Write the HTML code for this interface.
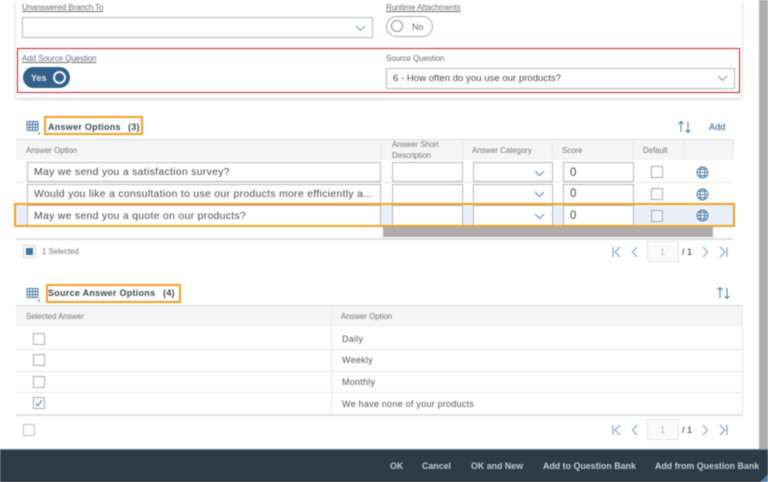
<!DOCTYPE html>
<html><head><meta charset="utf-8">
<style>
html,body{margin:0;padding:0;background:#fff;width:768px;height:482px;overflow:hidden}
#p{position:relative;width:768px;height:482px;overflow:hidden;font-family:"Liberation Sans",sans-serif;filter:blur(.5px);background:#fff}
#p div,#p span.t,#p svg{position:absolute}
.t{position:absolute;white-space:nowrap;line-height:1}
.lbl{font-size:8px;color:#6a6d70;letter-spacing:-.08px}
.u{text-decoration:underline}
.h{font-size:7.8px;color:#74777a}
.inp{background:#fff;border:1px solid #b5b7b9;box-sizing:border-box}
.big{font-size:10.4px;color:#4a4d50;letter-spacing:.32px}
.cell{font-size:9px;color:#55585b;letter-spacing:.25px}
.cb{width:12px;height:12px;border:1px solid #a9abad;background:#fff;box-sizing:border-box}
.ttl{font-size:9px;font-weight:bold;color:#3f4a55;letter-spacing:.27px}
.foot{font-size:8.85px;font-weight:bold;color:#c3cbd3}
.ln{background:#e8e9ea}
</style></head><body>
<div id="p">
<div style="left:759px;top:0;width:9px;height:449px;background:#adadad"></div>
<div style="left:16px;top:0;width:726px;height:98px;background:#fff;box-shadow:0 1px 3px rgba(0,0,0,.2)"></div>

<span class="t lbl u" style="left:22px;top:4px">Unanswered Branch To</span>
<div class="inp" style="left:22px;top:17px;width:351px;height:21px"></div>
<svg style="left:355px;top:25px" width="11" height="7" viewBox="0 0 11 7"><path d="M1 1l4.500 4.500L10 1" fill="none" stroke="#7d9bb5" stroke-width="1"/></svg>

<span class="t lbl u" style="left:386px;top:4px">Runtime Attachments</span>
<div style="left:386px;top:16px;width:47px;height:21px;border:1px solid #a9abad;border-radius:11px;box-sizing:border-box;background:#fff"></div>
<div style="left:391px;top:20px;width:12px;height:12px;border:1.500px solid #8d9092;border-radius:50%;box-sizing:border-box"></div>
<span class="t" style="left:412px;top:23px;font-size:9px;color:#6a6d70">No</span>

<div style="left:17px;top:48px;width:723px;height:45px;border:1.700px solid #c8202c;box-sizing:border-box"></div>
<span class="t lbl u" style="left:22px;top:55px">Add Source Question</span>
<div style="left:23px;top:67px;width:47px;height:21px;border-radius:11px;background:#346187"></div>
<span class="t" style="left:31px;top:74px;font-size:9px;font-weight:bold;color:#dfe7ee">Yes</span>
<div style="left:53px;top:71px;width:13px;height:13px;border:2px solid #f0f4f7;border-radius:50%;box-sizing:border-box"></div>

<span class="t lbl" style="left:386px;top:55px">Source Question</span>
<div class="inp" style="left:386px;top:68px;width:349px;height:21px"></div>
<span class="t big" style="left:393px;top:74px;font-size:9.600px;letter-spacing:0">6 - How often do you use our products?</span>
<svg style="left:717px;top:75px" width="11" height="7" viewBox="0 0 11 7"><path d="M1 1l4.500 4.500L10 1" fill="none" stroke="#7d9bb5" stroke-width="1"/></svg>

<!-- Answer options title -->
<svg style="left:26px;top:120px" width="15" height="15" viewBox="0 0 15 15"><path d="M1 1.500h11M1 4.500h11M1 7.500h11M1 10.500h11M1 1.500v9M3.700 1.500v9M6.500 1.500v9M9.300 1.500v9M12 1.500v9M12 13l1 1 1-1" stroke="#4d7da6" stroke-width="1" fill="none"/></svg>
<div style="left:44px;top:116px;width:99px;height:19px;border:2px solid #f2a024;box-sizing:border-box"></div>
<span class="t ttl" style="left:48px;top:123px">Answer Options</span>
<span class="t ttl" style="left:128px;top:123px">(3)</span>

<svg style="left:677px;top:120px" width="15" height="14" viewBox="0 0 15 14"><path d="M4 12V1.500M1.500 4L4 1.500 6.500 4M11 2v10.500M8.500 10l2.500 2.500 2.500-2.500" stroke="#4d7da6" stroke-width="1" fill="none"/></svg>
<span class="t" style="left:709px;top:123px;font-size:9px;color:#4d7da6;letter-spacing:.2px;-webkit-text-stroke:.2px #4d7da6">Add</span>

<!-- table 1 -->
<div style="left:16px;top:139px;width:717px;height:21px;background:#f5f5f5;border-top:1.500px solid #dcdddd;box-sizing:border-box"></div>
<div class="ln" style="left:381px;top:139px;width:1px;height:21px"></div>
<div class="ln" style="left:462px;top:139px;width:1px;height:21px"></div>
<div class="ln" style="left:552px;top:139px;width:1px;height:21px"></div>
<div class="ln" style="left:633px;top:139px;width:1px;height:21px"></div>
<div class="ln" style="left:684px;top:139px;width:1px;height:21px"></div>
<div class="ln" style="left:733px;top:139px;width:1px;height:21px"></div>
<span class="t h" style="left:26px;top:147px">Answer Option</span>
<span class="t h" style="left:392px;top:141px">Answer Short</span>
<span class="t h" style="left:392px;top:152px">Description</span>
<span class="t h" style="left:472px;top:147px">Answer Category</span>
<span class="t h" style="left:562px;top:147px">Score</span>
<span class="t h" style="left:643px;top:147px">Default</span>

<div class="ln" style="left:16px;top:182px;width:717px;height:1px"></div>
<div class="ln" style="left:16px;top:204px;width:717px;height:1px"></div>
<div style="left:16px;top:205px;width:717px;height:21px;background:#e9f0f7"></div>
<div style="left:16px;top:238px;width:717px;height:1.500px;background:#dfe0e1"></div>
<div style="left:383px;top:227px;width:330px;height:10px;background:#adadad"></div>

<div class="inp" style="left:27px;top:162px;width:354px;height:20px"></div>
<div class="inp" style="left:27px;top:184px;width:354px;height:20px"></div>
<div class="inp" style="left:27px;top:205px;width:354px;height:21px"></div>
<span class="t big" style="left:34px;top:168px">May we send you a satisfaction survey?</span>
<span class="t big" style="left:34px;top:190px">Would you like a consultation to use our products more efficiently a...</span>
<span class="t big" style="left:34px;top:212px">May we send you a quote on our products?</span>

<div class="inp" style="left:392px;top:162px;width:71px;height:20px"></div>
<div class="inp" style="left:392px;top:184px;width:71px;height:20px"></div>
<div class="inp" style="left:392px;top:205px;width:71px;height:21px"></div>
<div class="inp" style="left:473px;top:162px;width:80px;height:20px"></div>
<div class="inp" style="left:473px;top:184px;width:80px;height:20px"></div>
<div class="inp" style="left:473px;top:205px;width:80px;height:21px"></div>
<svg style="left:534px;top:170px" width="11" height="7" viewBox="0 0 11 7"><path d="M1 1l4.500 4.500L10 1" fill="none" stroke="#5f8aae" stroke-width="1"/></svg>
<svg style="left:534px;top:191px" width="11" height="7" viewBox="0 0 11 7"><path d="M1 1l4.500 4.500L10 1" fill="none" stroke="#5f8aae" stroke-width="1"/></svg>
<svg style="left:534px;top:213px" width="11" height="7" viewBox="0 0 11 7"><path d="M1 1l4.500 4.500L10 1" fill="none" stroke="#5f8aae" stroke-width="1"/></svg>
<div class="inp" style="left:563px;top:162px;width:71px;height:20px"></div>
<div class="inp" style="left:563px;top:184px;width:71px;height:20px"></div>
<div class="inp" style="left:563px;top:205px;width:71px;height:21px"></div>
<span class="t big" style="left:570px;top:168px;font-size:11.500px">0</span>
<span class="t big" style="left:570px;top:189px;font-size:11.500px">0</span>
<span class="t big" style="left:570px;top:211px;font-size:11.500px">0</span>

<div class="cb" style="left:651px;top:166px"></div>
<div class="cb" style="left:651px;top:188px"></div>
<div class="cb" style="left:651px;top:210px;background:#eef3f8"></div>
<svg style="left:696px;top:166px" width="13" height="13" viewBox="0 0 13 13"><g fill="none" stroke="#4d7da6" stroke-width=".9"><circle cx="6.500" cy="6.500" r="5.500"/><ellipse cx="6.500" cy="6.500" rx="2.500" ry="5.500"/><path d="M1 6.500h11M2 3.500h9M2 9.500h9"/></g></svg>
<svg style="left:696px;top:188px" width="13" height="13" viewBox="0 0 13 13"><g fill="none" stroke="#4d7da6" stroke-width=".9"><circle cx="6.500" cy="6.500" r="5.500"/><ellipse cx="6.500" cy="6.500" rx="2.500" ry="5.500"/><path d="M1 6.500h11M2 3.500h9M2 9.500h9"/></g></svg>
<svg style="left:696px;top:209px" width="13" height="13" viewBox="0 0 13 13"><g fill="none" stroke="#4d7da6" stroke-width=".9"><circle cx="6.500" cy="6.500" r="5.500"/><ellipse cx="6.500" cy="6.500" rx="2.500" ry="5.500"/><path d="M1 6.500h11M2 3.500h9M2 9.500h9"/></g></svg>

<div style="left:14px;top:203px;width:721px;height:24px;border:2px solid #f2a024;box-sizing:border-box"></div>

<div class="cb" style="left:23px;top:245px;border-radius:2px;width:13px;height:13px;border-color:#d0d2d4"></div>
<div style="left:26px;top:248px;width:7px;height:7px;background:#3a76a8"></div>
<span class="t h" style="left:42px;top:248px">1 Selected</span>

<!-- pager 1 -->
<svg style="left:611px;top:246px" width="120" height="12" viewBox="0 0 120 12"><g fill="none" stroke="#8fafca" stroke-width="1.300"><path d="M2 1v10M9 1L4 6l5 5M26 1l-4.500 5 4.500 5M92 1l4.500 5L92 11M109 1l5 5-5 5M116 1v10"/></g></svg>
<div style="left:647px;top:241px;width:32px;height:21px;background:#fafafa;border:1px solid #e5e6e7;box-sizing:border-box"></div>
<span class="t" style="left:660px;top:248px;font-size:9px;color:#b8babc">1</span>
<span class="t" style="left:682px;top:248px;font-size:9px;color:#6a6d70;font-weight:bold">/ 1</span>

<!-- Source title -->
<svg style="left:26px;top:287px" width="15" height="15" viewBox="0 0 15 15"><path d="M1 1.500h11M1 4.500h11M1 7.500h11M1 10.500h11M1 1.500v9M3.700 1.500v9M6.500 1.500v9M9.300 1.500v9M12 1.500v9M12 13l1 1 1-1" stroke="#4d7da6" stroke-width="1" fill="none"/></svg>
<div style="left:46px;top:284px;width:135px;height:19px;border:2px solid #f2a024;box-sizing:border-box"></div>
<span class="t ttl" style="left:48px;top:289px">Source Answer Options</span>
<span class="t ttl" style="left:163px;top:289px">(4)</span>
<svg style="left:716px;top:286px" width="15" height="14" viewBox="0 0 15 14"><path d="M4 12V1.500M1.500 4L4 1.500 6.500 4M11 2v10.500M8.500 10l2.500 2.500 2.500-2.500" stroke="#4d7da6" stroke-width="1" fill="none"/></svg>

<!-- table 2 -->
<div style="left:16px;top:305px;width:727px;height:22px;background:#f5f5f5;border-top:1.500px solid #d8d9da;box-sizing:border-box"></div>
<div class="ln" style="left:331px;top:305px;width:1px;height:109px"></div>
<div class="ln" style="left:742px;top:305px;width:1px;height:109px"></div>
<div class="ln" style="left:16px;top:349px;width:727px;height:1px"></div>
<div class="ln" style="left:16px;top:371px;width:727px;height:1px"></div>
<div class="ln" style="left:16px;top:392px;width:727px;height:1px"></div>
<div style="left:16px;top:414px;width:727px;height:2px;background:#e0e1e2"></div>
<span class="t h" style="left:26px;top:313px">Selected Answer</span>
<span class="t h" style="left:341px;top:313px">Answer Option</span>
<div class="cb" style="left:33px;top:333px"></div>
<div class="cb" style="left:33px;top:354px"></div>
<div class="cb" style="left:33px;top:376px"></div>
<div class="cb" style="left:33px;top:397px"></div>
<svg style="left:35px;top:399px" width="8" height="8" viewBox="0 0 8 8"><path d="M1 4.500L3 6.800 7 1" fill="none" stroke="#3f7db0" stroke-width="1"/></svg>
<span class="t cell" style="left:342px;top:335px">Daily</span>
<span class="t cell" style="left:342px;top:356px">Weekly</span>
<span class="t cell" style="left:342px;top:378px">Monthly</span>
<span class="t cell" style="left:342px;top:400px">We have none of your products</span>

<div class="cb" style="left:23px;top:424px;width:12px;height:12px;border-radius:2px;border-color:#b9bbbd"></div>

<svg style="left:611px;top:424px" width="120" height="12" viewBox="0 0 120 12"><g fill="none" stroke="#8fafca" stroke-width="1.300"><path d="M2 1v10M9 1L4 6l5 5M26 1l-4.500 5 4.500 5M92 1l4.500 5L92 11M109 1l5 5-5 5M116 1v10"/></g></svg>
<div style="left:647px;top:419px;width:32px;height:21px;background:#fafafa;border:1px solid #e5e6e7;box-sizing:border-box"></div>
<span class="t" style="left:660px;top:426px;font-size:9px;color:#b8babc">1</span>
<span class="t" style="left:682px;top:426px;font-size:9px;color:#6a6d70;font-weight:bold">/ 1</span>

<!-- footer -->
<div style="left:0;top:449px;width:768px;height:33px;background:#2f3a47;border-top:1px solid #6d7784;border-bottom:1px solid #1b222b;box-sizing:border-box"></div>
<span class="t foot" style="left:390px;top:462px">OK</span>
<span class="t foot" style="left:422px;top:462px">Cancel</span>
<span class="t foot" style="left:471px;top:462px">OK and New</span>
<span class="t foot" style="left:543px;top:462px">Add to Question Bank</span>
<span class="t foot" style="left:655px;top:462px">Add from Question Bank</span>
<svg style="left:760px;top:474px" width="8" height="8" viewBox="0 0 8 8"><path d="M8 0v8H0z" fill="#4d7da6"/></svg>
</div>
</body></html>
